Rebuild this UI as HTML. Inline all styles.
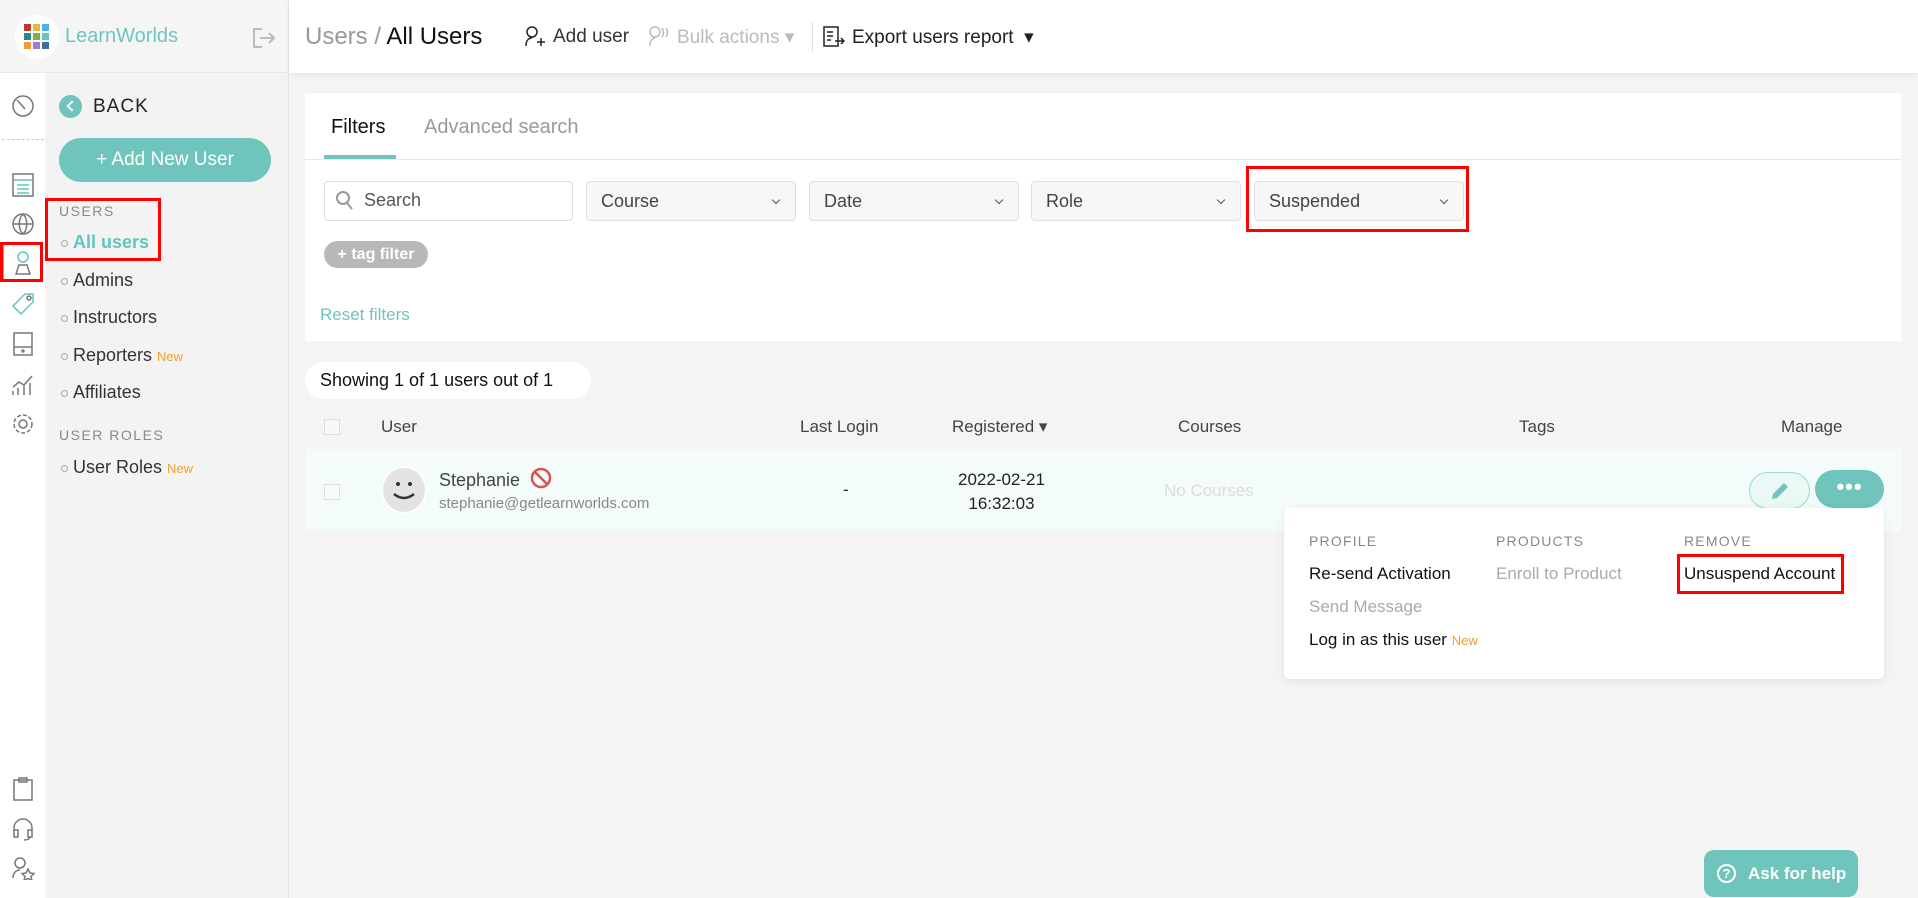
<!DOCTYPE html>
<html><head><meta charset="utf-8">
<style>
*{box-sizing:border-box;margin:0;padding:0}
body{width:1918px;height:898px;overflow:hidden;background:#f4f4f4;font-family:"Liberation Sans",sans-serif;color:#333;position:relative}
.abs{position:absolute}
.rail{left:0;top:73px;width:45px;height:825px;background:#fff}
.nav{left:45px;top:73px;width:244px;height:825px;background:#f3f3f3;border-right:1px solid #e6e6e6}
.logohead{left:0;top:0;width:289px;height:73px;background:#f5f5f5;border-bottom:1px solid #e9e9e9;border-right:1px solid #e6e6e6}
.topbar{left:289px;top:0;width:1629px;height:73px;background:#fff;box-shadow:0 2px 6px rgba(0,0,0,.06)}
.navitem{position:absolute;left:61px;font-size:18px;color:#333}
.navitem:before{content:"";position:absolute;left:0;top:8px;width:5px;height:5px;border:1px solid #aaa;border-radius:50%}
.navitem span{margin-left:12px}
.new{color:#f0a030;font-size:13px}
.sect{position:absolute;left:59px;font-size:14px;letter-spacing:1.5px;color:#888}
.sel{position:absolute;top:181px;height:40px;background:#f7f7f7;border:1px solid #e0e0e0;border-radius:4px;font-size:18px;color:#444;padding:9px 14px}
.sel:after{content:"";position:absolute;right:16px;top:15px;width:5px;height:5px;border-right:1.5px solid #555;border-bottom:1.5px solid #555;transform:rotate(45deg)}
.th{position:absolute;top:417px;font-size:17px;color:#444}
.red{position:absolute;border:3px solid #f00}
.ic{position:absolute;stroke:#777;fill:none;stroke-width:1.5}
</style></head><body>
<div class="abs logohead"></div>
<div class="abs" style="left:15px;top:15px;width:44px;height:44px;border-radius:50%;background:#fff"></div>
<svg class="abs" style="left:24px;top:24px" width="26" height="26">
<rect x="0" y="0" width="7" height="7" fill="#c0392b"/><rect x="9" y="0" width="7" height="7" fill="#e5b93a"/><rect x="18" y="0" width="7" height="7" fill="#4fb3e8"/>
<rect x="0" y="9" width="7" height="7" fill="#2a8b8b"/><rect x="9" y="9" width="7" height="7" fill="#7cb342"/><rect x="18" y="9" width="7" height="7" fill="#5fc6c0"/>
<rect x="0" y="18" width="7" height="7" fill="#f29c38"/><rect x="9" y="18" width="7" height="7" fill="#9c7bd6"/><rect x="18" y="18" width="7" height="7" fill="#3d6fa5"/></svg>
<div class="abs" style="left:65px;top:25px;font-size:20px;color:#6fc5bb">LearnWorlds</div>
<svg class="ic" style="left:252px;top:27px;stroke:#bbb;stroke-width:2" width="24" height="22"><path d="M10 2H2v18h8M8 11h14M17 6l5 5-5 5"/></svg>
<div class="abs rail"></div>
<div class="abs nav"></div>
<div class="abs topbar"></div>
<!-- rail icons -->
<svg class="ic" style="left:11px;top:94px" width="24" height="24"><circle cx="12" cy="12" r="10"/><path d="M6 6l8 9"/></svg>
<div class="abs" style="left:2px;top:139px;width:42px;border-top:1px dashed #ccc"></div>
<svg class="ic" style="left:12px;top:173px" width="22" height="24"><rect x="1" y="1" width="20" height="22"/><path d="M1 7h20M5 12h12M5 16h12M5 20h12" stroke="#5fc6c0"/></svg>
<svg class="ic" style="left:11px;top:212px" width="24" height="24"><circle cx="12" cy="12" r="10"/><path d="M2 12h20M12 2c-5 5-5 15 0 20M12 2c5 5 5 15 0 20"/></svg>
<div class="abs" style="left:0;top:242px;width:4px;height:40px;background:#5fc6c0"></div>
<svg class="ic" style="left:12px;top:250px" width="22" height="26"><circle cx="11" cy="7" r="5" stroke="#5fc6c0"/><path d="M4 24l3-9h8l3 9z"/></svg>
<div class="red" style="left:0;top:242px;width:43px;height:40px"></div>
<svg class="ic" style="left:11px;top:290px" width="24" height="26"><path d="M2 16L14 4h8v8L10 24z" stroke="#5fc6c0"/><circle cx="18" cy="8" r="2"/></svg>
<svg class="ic" style="left:13px;top:332px" width="20" height="24"><rect x="1" y="1" width="18" height="22"/><path d="M1 15h18"/><circle cx="10" cy="19" r="1"/></svg>
<svg class="ic" style="left:11px;top:373px" width="24" height="24"><path d="M2 22v-4M7 22v-7M13 22v-9M19 22v-12M2 14l6-5 5 3 8-9" /></svg>
<svg class="ic" style="left:11px;top:412px" width="24" height="24"><circle cx="12" cy="12" r="4"/><circle cx="12" cy="12" r="9" stroke-dasharray="4 2"/></svg>
<svg class="ic" style="left:13px;top:777px" width="20" height="24"><rect x="1" y="3" width="18" height="20"/><rect x="6" y="1" width="8" height="4"/></svg>
<svg class="ic" style="left:11px;top:817px" width="24" height="24"><path d="M3 14v-3a9 9 0 0118 0v3M3 13h4v7H3zM17 13h4v7h-4zM19 20c0 2-3 3-6 3"/></svg>
<svg class="ic" style="left:11px;top:856px" width="24" height="24"><circle cx="9" cy="7" r="5"/><path d="M2 22c0-5 3-8 7-8M17 13l2 4 4 .5-3 3 1 4-4-2-4 2 1-4-3-3 4-.5z"/></svg>
<!-- nav -->
<div class="abs" style="left:59px;top:95px;width:23px;height:23px;border-radius:50%;background:#6fc5bb"></div>
<div class="abs" style="left:68px;top:102px;width:8px;height:8px;border-left:2.5px solid #fff;border-bottom:2.5px solid #fff;transform:rotate(45deg)"></div>
<div class="abs" style="left:93px;top:96px;font-size:19px;letter-spacing:1px;color:#222">BACK</div>
<div class="abs" style="left:59px;top:138px;width:212px;height:44px;border-radius:22px;background:#6fc5bb;color:#fff;font-size:19px;text-align:center;line-height:44px">+ Add New User</div>
<div class="sect" style="top:203px">USERS</div>
<div class="navitem" style="top:232px;color:#5fc6c0;font-weight:bold"><span>All users</span></div>
<div class="red" style="left:45px;top:198px;width:116px;height:63px"></div>
<div class="navitem" style="top:270px"><span>Admins</span></div>
<div class="navitem" style="top:307px"><span>Instructors</span></div>
<div class="navitem" style="top:345px"><span>Reporters <b class="new" style="font-weight:normal">New</b></span></div>
<div class="navitem" style="top:382px"><span>Affiliates</span></div>
<div class="sect" style="top:427px">USER ROLES</div>
<div class="navitem" style="top:457px"><span>User Roles <b class="new" style="font-weight:normal">New</b></span></div>
<!-- topbar -->
<div class="abs" style="left:305px;top:23px;font-size:24px;color:#999">Users / <span style="color:#111">All Users</span></div>
<svg class="ic" style="left:524px;top:26px;stroke:#222" width="22" height="22"><circle cx="8" cy="6" r="5"/><path d="M2 20c0-6 3-8 6-8M13 16h8M17 12v8"/></svg>
<div class="abs" style="left:553px;top:26px;font-size:19px;color:#333">Add user</div>
<svg class="ic" style="left:648px;top:26px;stroke:#bbb" width="22" height="22"><circle cx="7" cy="6" r="5"/><path d="M2 20c0-6 3-8 5-8M14 2c2 3 2 6 0 9M18 2c2 3 2 6 0 9"/></svg>
<div class="abs" style="left:677px;top:26px;font-size:19px;color:#bbb">Bulk actions ▾</div>
<div class="abs" style="left:812px;top:22px;height:30px;border-left:1px solid #ddd"></div>
<svg class="ic" style="left:823px;top:26px;stroke:#222" width="22" height="22"><rect x="1" y="1" width="14" height="19"/><path d="M4 6h6M4 10h6M4 14h4M12 15h9M18 12l3 3-3 3"/></svg>
<div class="abs" style="left:852px;top:26px;font-size:19px;color:#222">Export users report &nbsp;▾</div>
<!-- filter card -->
<div class="abs" style="left:305px;top:93px;width:1596px;height:248px;background:#fff"></div>
<div class="abs" style="left:331px;top:116px;font-size:20px;color:#111">Filters</div>
<div class="abs" style="left:424px;top:116px;font-size:20px;color:#999">Advanced search</div>
<div class="abs" style="left:305px;top:159px;width:1596px;border-top:1px solid #e6e6e6"></div>
<div class="abs" style="left:324px;top:155px;width:72px;height:4px;background:#6fc5bb"></div>
<div class="abs" style="left:324px;top:181px;width:249px;height:40px;border:1px solid #ddd;border-radius:4px;background:#fff"></div>
<svg class="ic" style="left:336px;top:191px;stroke:#999;stroke-width:2" width="18" height="20"><circle cx="7" cy="7" r="6"/><path d="M11 12l5 6"/></svg>
<div class="abs" style="left:364px;top:190px;font-size:18px;color:#555">Search</div>
<div class="sel" style="left:586px;width:210px">Course</div>
<div class="sel" style="left:809px;width:210px">Date</div>
<div class="sel" style="left:1031px;width:210px">Role</div>
<div class="sel" style="left:1254px;width:210px">Suspended</div>
<div class="red" style="left:1246px;top:166px;width:223px;height:66px"></div>
<div class="abs" style="left:324px;top:241px;width:104px;height:27px;border-radius:14px;background:#b8b8b8;color:#fff;font-size:16px;font-weight:bold;text-align:center;line-height:27px">+ tag filter</div>
<div class="abs" style="left:320px;top:305px;font-size:17px;color:#6fc5bb">Reset filters</div>
<!-- table -->
<div class="abs" style="left:305px;top:362px;width:286px;height:37px;border-radius:19px;background:#fff;font-size:18px;color:#111;line-height:37px;padding-left:15px">Showing 1 of 1 users out of 1</div>
<div class="abs" style="left:324px;top:419px;width:16px;height:16px;border:1px solid #ddd;background:#f8f8f8"></div>
<div class="th" style="left:381px">User</div>
<div class="th" style="left:800px">Last Login</div>
<div class="th" style="left:952px">Registered ▾</div>
<div class="th" style="left:1178px">Courses</div>
<div class="th" style="left:1519px">Tags</div>
<div class="th" style="left:1781px">Manage</div>
<div class="abs" style="left:305px;top:449px;width:1596px;height:82px;background:#f4fcfb"></div>
<div class="abs" style="left:324px;top:484px;width:16px;height:16px;border:1px solid #ddd;background:#fafafa"></div>
<div class="abs" style="left:381px;top:466px;width:46px;height:48px;border-radius:50%;background:#e3e3e3;border:2px solid #fff"></div>
<svg class="abs" style="left:386px;top:472px" width="36" height="36"><circle cx="12" cy="12" r="2" fill="#333"/><circle cx="24" cy="12" r="2" fill="#333"/><path d="M8 22q10 8 20 0" stroke="#333" stroke-width="2.5" fill="none"/></svg>
<div class="abs" style="left:439px;top:470px;font-size:18px;color:#444">Stephanie</div>
<svg class="abs" style="left:530px;top:467px" width="22" height="22"><circle cx="11" cy="11" r="9" stroke="#d9534f" stroke-width="2.5" fill="none"/><path d="M5 5l12 12" stroke="#d9534f" stroke-width="2.5"/></svg>
<div class="abs" style="left:439px;top:495px;font-size:15px;color:#888">stephanie@getlearnworlds.com</div>
<div class="abs" style="left:843px;top:480px;font-size:17px;color:#222">-</div>
<div class="abs" style="left:958px;top:468px;font-size:17px;color:#222;text-align:center;line-height:24px">2022-02-21<br>16:32:03</div>
<div class="abs" style="left:1164px;top:481px;font-size:17px;color:#ddd">No Courses</div>
<div class="abs" style="left:1749px;top:472px;width:61px;height:37px;border-radius:19px;background:#eaf8f6;border:1px solid #9ed8d1"></div>
<svg class="abs" style="left:1769px;top:480px" width="22" height="22"><path d="M3 19l1-5L15 3l4 4L8 18z" fill="#6fc5bb"/></svg>
<div class="abs" style="left:1815px;top:470px;width:69px;height:38px;border-radius:19px;background:#6fc5bb;color:#fff;text-align:center;font-size:22px;line-height:34px;letter-spacing:1px;font-weight:bold">•••</div>
<!-- dropdown -->
<div class="abs" style="left:1284px;top:508px;width:600px;height:171px;border-radius:6px;background:#fff;box-shadow:0 2px 10px rgba(0,0,0,.08)"></div>
<div class="abs" style="left:1309px;top:533px;font-size:14px;letter-spacing:1.2px;color:#888">PROFILE</div>
<div class="abs" style="left:1496px;top:533px;font-size:14px;letter-spacing:1.2px;color:#888">PRODUCTS</div>
<div class="abs" style="left:1684px;top:533px;font-size:14px;letter-spacing:1.2px;color:#888">REMOVE</div>
<div class="abs" style="left:1309px;top:564px;font-size:17px;color:#111">Re-send Activation</div>
<div class="abs" style="left:1309px;top:597px;font-size:17px;color:#aaa">Send Message</div>
<div class="abs" style="left:1309px;top:630px;font-size:17px;color:#111">Log in as this user <span class="new">New</span></div>
<div class="abs" style="left:1496px;top:564px;font-size:17px;color:#aaa">Enroll to Product</div>
<div class="abs" style="left:1684px;top:564px;font-size:17px;color:#111">Unsuspend Account</div>
<div class="red" style="left:1677px;top:554px;width:167px;height:40px"></div>
<!-- help -->
<div class="abs" style="left:1704px;top:850px;width:154px;height:47px;border-radius:10px;background:#6fc5bb;color:#fff;font-size:17px;font-weight:bold;line-height:47px;padding-left:44px">Ask for help</div>
<div class="abs" style="left:1717px;top:864px;width:19px;height:19px;border:2px solid #fff;border-radius:50%;color:#fff;font-size:13px;text-align:center;line-height:15px;font-weight:bold">?</div>
</body></html>
